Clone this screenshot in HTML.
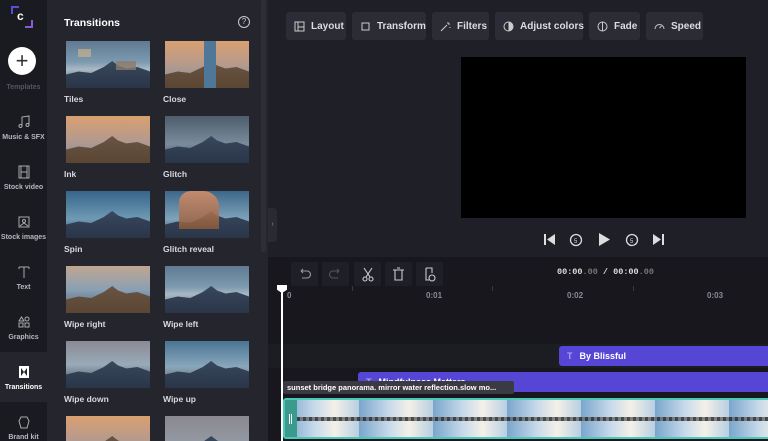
<!DOCTYPE html>
<html><head><style>
*{margin:0;padding:0;box-sizing:border-box}
html,body{width:768px;height:441px;overflow:hidden}
body{background:#1e1f27;font-family:"Liberation Sans",sans-serif;position:relative;color:#ddd}
.abs{position:absolute}
#side{left:0;top:0;width:47px;height:441px;background:#1a1a21}
.si{position:absolute;left:0;width:47px;text-align:center;font-size:7px;color:#b8b8c0;font-weight:bold;white-space:nowrap}
.si svg{display:block;margin:0 auto 5px}
#panel{left:47px;top:0;width:221px;height:441px;background:#25252e}
.th{position:absolute;width:84px;height:47px;overflow:hidden;background:linear-gradient(#5f7a92 0%,#7d9ab0 45%,#a9b9c4 60%,#50657a 100%)}
.th .m{position:absolute;left:0;right:0;bottom:0;height:30px;background:linear-gradient(#3a4a60,#2a3548);clip-path:polygon(0 55%,15% 45%,30% 50%,45% 30%,55% 10%,62% 25%,72% 35%,85% 30%,100% 45%,100% 100%,0 100%)}
.th.w .m{background:linear-gradient(#6b5646,#5a4632)}
.th.w{background:linear-gradient(#d9a070 0%,#b69a8c 50%,#7f93a5 100%)}
.lb{position:absolute;font-size:8.5px;color:#d8d8de;font-weight:bold}
.tb{position:absolute;top:12px;height:28px;background:#2b2c35;border-radius:3px;font-size:10px;color:#dcdce2;font-weight:bold;display:flex;align-items:center;padding-left:8px;gap:6px;white-space:nowrap}
.tb svg{flex:none}
#tl{left:268px;top:257px;width:500px;height:184px;background:#17171d}
.tbt{position:absolute;top:262px;width:27px;height:24px;background:#1f1f27;border-radius:2px}
.rl{position:absolute;top:291px;font-size:8px;color:#8a8a94;font-weight:bold}
.tk{position:absolute;top:286px;width:1px;height:5px;background:#3a3a44}
</style></head><body>
<div id="side" class="abs">
  <div class="abs" style="left:11px;top:6px;width:22px;height:22px">
    <div class="abs" style="left:0;top:0;width:8px;height:8px;border-left:2px solid #5a4be0;border-top:2px solid #5a4be0"></div>
    <div class="abs" style="right:0;bottom:0;width:8px;height:8px;border-right:2px solid #8a5ad8;border-bottom:2px solid #8a5ad8"></div>
    <div class="abs" style="left:6px;top:3px;font-size:12px;font-weight:bold;color:#fff">c</div>
  </div>
  <div class="abs" style="left:8px;top:47px;width:28px;height:28px;border-radius:50%;background:#fff;color:#333;font-size:22px;line-height:27px;text-align:center">+</div>
  <div class="si" style="top:84px;color:#55555e">Templates</div>
  <div class="si" style="top:115px"><svg width="12" height="14" viewBox="0 0 12 14" fill="none" stroke="#aaa"><path d="M4 11V2l7-1v9"/><circle cx="2.5" cy="11" r="1.5"/><circle cx="9.5" cy="10" r="1.5"/></svg>Music &amp; SFX</div>
  <div class="si" style="top:165px"><svg width="12" height="14" viewBox="0 0 12 14" fill="none" stroke="#aaa"><rect x="1" y="1" width="10" height="12"/><path d="M3 1v12M9 1v12M3 7h6"/></svg>Stock video</div>
  <div class="si" style="top:215px"><svg width="12" height="14" viewBox="0 0 12 14" fill="none" stroke="#aaa"><rect x="1" y="2" width="10" height="10"/><circle cx="6" cy="6" r="1.5"/><path d="M2 11l4-3 4 3"/></svg>Stock images</div>
  <div class="si" style="top:265px"><svg width="12" height="14" viewBox="0 0 12 14" fill="none" stroke="#aaa"><path d="M1 2h10M6 2v11M1 2v2M11 2v2"/></svg>Text</div>
  <div class="si" style="top:315px"><svg width="12" height="14" viewBox="0 0 12 14" fill="none" stroke="#aaa"><path d="M1 6l2.5-4 2.5 4z"/><circle cx="9" cy="4" r="2"/><rect x="1" y="8" width="4" height="4"/><rect x="7" y="8" width="4" height="4"/></svg>Graphics</div>
  <div class="abs" style="left:0;top:352px;width:47px;height:50px;background:#25252e"></div>
  <div class="si" style="top:365px;color:#fff"><svg width="12" height="14" viewBox="0 0 12 14"><rect x="1" y="1" width="10" height="12" fill="#fff"/><path d="M3 3l3 4-3 4zM9 3l-3 4 3 4z" fill="#25252e"/></svg>Transitions</div>
  <div class="si" style="top:415px"><svg width="12" height="14" viewBox="0 0 12 14" fill="none" stroke="#aaa"><path d="M3 2h6l2 4-2 7H3L1 6z"/></svg>Brand kit</div>
</div>
<div id="panel" class="abs">
  <div class="abs" style="left:17px;top:17px;font-size:10.5px;font-weight:bold;color:#fff">Transitions</div>
  <div class="abs" style="left:191px;top:16px;width:12px;height:12px;border:1px solid #ccc;border-radius:50%;font-size:8px;text-align:center;line-height:10px;color:#ccc">?</div>
  <div class="abs" style="left:214px;top:0;width:5px;height:252px;background:#2e2e38;border-radius:2px"></div>
</div>
<div class="th" style="left:66px;top:41px"><div class="m"></div><div class="abs" style="left:12px;top:8px;width:13px;height:8px;background:#c9b08a;opacity:.7"></div><div class="abs" style="left:50px;top:20px;width:20px;height:9px;background:#8a7a6a;opacity:.8"></div></div>
<div class="th w" style="left:165px;top:41px"><div class="m"></div><div class="abs" style="left:39px;top:0;width:12px;height:47px;background:#4f7898"></div></div>
<div class="th w" style="left:66px;top:116px"><div class="m"></div></div>
<div class="th" style="left:165px;top:116px;background:linear-gradient(#4e5c6c,#7a8c9c 60%,#3a4656)"><div class="m"></div></div>
<div class="th" style="left:66px;top:191px;background:linear-gradient(#36658a,#6f9ab4 60%,#3a5570)"><div class="m"></div></div>
<div class="th" style="left:165px;top:191px;background:linear-gradient(#3d6788,#7fa3bc 60%,#3a5570)"><div class="m"></div><div class="abs" style="left:14px;top:0;width:40px;height:38px;background:linear-gradient(#d9906a,#8a5a3a);opacity:.85;border-radius:30% 40% 0 0"></div></div>
<div class="th w" style="left:66px;top:266px;background:linear-gradient(#c0a690,#8aa0b4 50%,#4e627a)"><div class="m"></div></div>
<div class="th" style="left:165px;top:266px"><div class="m"></div></div>
<div class="th" style="left:66px;top:341px;background:linear-gradient(#8a8a94,#9aaab8 50%,#3a4a5e)"><div class="m"></div></div>
<div class="th" style="left:165px;top:341px;background:linear-gradient(#4a7494,#8aa8bc 55%,#5a5040)"><div class="m"></div></div>
<div class="th w" style="left:66px;top:416px"><div class="m"></div></div>
<div class="th" style="left:165px;top:416px;background:linear-gradient(#8a8890,#9aa6b0)"><div class="m"></div></div>
<div class="lb" style="left:64px;top:94px">Tiles</div><div class="lb" style="left:163px;top:94px">Close</div>
<div class="lb" style="left:64px;top:169px">Ink</div><div class="lb" style="left:163px;top:169px">Glitch</div>
<div class="lb" style="left:64px;top:244px">Spin</div><div class="lb" style="left:163px;top:244px">Glitch reveal</div>
<div class="lb" style="left:64px;top:319px">Wipe right</div><div class="lb" style="left:163px;top:319px">Wipe left</div>
<div class="lb" style="left:64px;top:394px">Wipe down</div><div class="lb" style="left:163px;top:394px">Wipe up</div>
<div class="abs" style="left:268px;top:208px;width:9px;height:34px;background:#2a2a33;border-radius:0 4px 4px 0;font-size:7px;color:#888;line-height:34px;text-align:center">‹</div>
<div class="tb" style="left:286px;width:60px"><svg width="11" height="11" fill="none" stroke="#ccc"><rect x="1" y="1" width="9" height="9"/><path d="M4 1v9M4 6h6"/></svg>Layout</div>
<div class="tb" style="left:352px;width:74px"><svg width="11" height="11" fill="none" stroke="#ccc"><rect x="2" y="2" width="7" height="7"/></svg>Transform</div>
<div class="tb" style="left:432px;width:57px"><svg width="11" height="11" fill="none" stroke="#ccc"><path d="M1 10l6-6M8 1v2M10 3H8M10 6v1"/></svg>Filters</div>
<div class="tb" style="left:495px;width:88px"><svg width="11" height="11"><circle cx="5.5" cy="5.5" r="4.5" fill="none" stroke="#ccc"/><path d="M5.5 1a4.5 4.5 0 0 1 0 9z" fill="#ccc"/></svg>Adjust colors</div>
<div class="tb" style="left:589px;width:51px"><svg width="11" height="11" fill="none" stroke="#ccc"><circle cx="5.5" cy="5.5" r="4.5"/><path d="M5.5 1v9"/></svg>Fade</div>
<div class="tb" style="left:646px;width:57px"><svg width="11" height="11" fill="none" stroke="#ccc"><path d="M1 8a4.5 4.5 0 0 1 9 0M5.5 7l2-2"/></svg>Speed</div>
<div class="abs" style="left:461px;top:57px;width:285px;height:161px;background:#000"></div>
<svg class="abs" style="left:540px;top:231px" width="130" height="18" fill="#ddd">
<rect x="4" y="3" width="2" height="11"/><path d="M15 3v11l-8-5.5z"/>
<circle cx="36" cy="9" r="5.5" fill="none" stroke="#ddd" stroke-width="1.3"/><text x="34" y="12" font-size="6" font-family="Liberation Sans">5</text>
<path d="M59 2v13l11-6.5z"/>
<circle cx="92" cy="9" r="5.5" fill="none" stroke="#ddd" stroke-width="1.3"/><text x="90" y="12" font-size="6" font-family="Liberation Sans">5</text>
<path d="M113 3v11l8-5.5z"/><rect x="122" y="3" width="2" height="11"/>
</svg>
<div id="tl" class="abs"></div>
<div class="tbt" style="left:291px"></div><div class="tbt" style="left:322px"></div><div class="tbt" style="left:354px"></div><div class="tbt" style="left:385px"></div><div class="tbt" style="left:416px"></div>
<svg class="abs" style="left:291px;top:262px" width="160" height="24" fill="none" stroke="#999" stroke-width="1.1">
<path d="M10 9h6a3 3 0 0 1 0 7h-5M10 9l2-2M10 9l2 2"/>
<path d="M48 9h-6a3 3 0 0 0 0 7h5M48 9l-2-2M48 9l-2 2" stroke="#555"/>
<path d="M73 6l6 9M81 6l-6 9" stroke="#ccc"/><circle cx="74" cy="17" r="2" stroke="#ccc"/><circle cx="80" cy="17" r="2" stroke="#ccc"/>
<path d="M102 8h11M104 8v10h7V8M106 6h3" stroke="#ccc"/>
<path d="M135 6h6v5M135 6v12h3" stroke="#ccc"/><circle cx="141" cy="16" r="3" stroke="#ccc"/>
</svg>
<div class="abs" style="left:557px;top:267px;font-family:'Liberation Mono',monospace;font-size:8.5px;font-weight:bold;color:#ddd;white-space:nowrap">00:00<span style="color:#777">.00</span> / 00:00<span style="color:#777">.00</span></div>
<div class="rl" style="left:287px">0</div><div class="rl" style="left:426px">0:01</div><div class="rl" style="left:567px">0:02</div><div class="rl" style="left:707px">0:03</div>
<div class="tk" style="left:352px"></div><div class="tk" style="left:492px"></div><div class="tk" style="left:633px"></div>
<div class="abs" style="left:268px;top:344px;width:500px;height:24px;background:#1c1c23"></div>
<div class="abs" style="left:559px;top:346px;width:209px;height:20px;background:#5646d6;border-radius:3px 0 0 3px;font-size:9px;font-weight:bold;color:#fff;line-height:20px;padding-left:8px"><span style="color:#a9a0f0;margin-right:7px">T</span>By Blissful</div>
<div class="abs" style="left:358px;top:372px;width:410px;height:20px;background:#5646d6;border-radius:3px 0 0 3px;font-size:9px;font-weight:bold;color:#fff;line-height:20px;padding-left:8px;overflow:hidden"><span style="color:#a9a0f0;margin-right:7px">T</span>Mindfulness Matters</div>
<div class="abs" style="left:283px;top:381px;width:231px;height:13px;background:#3a3a42;border-radius:2px;font-size:7.5px;font-weight:bold;color:#fff;line-height:13px;padding-left:4px;white-space:nowrap;overflow:hidden">sunset bridge panorama. mirror water reflection.slow mo...</div>
<div class="abs" style="left:283px;top:398px;width:485px;height:41px;border:2px solid #4ac8b8;border-right:none;border-radius:3px 0 0 3px;overflow:hidden;background:repeating-linear-gradient(90deg,#7aa6cc 0px,#c8daea 30px,#f4f0e8 50px,#b8cfe2 74px);">
  <div class="abs" style="left:0;top:17px;width:485px;height:4px;background:repeating-linear-gradient(90deg,#222 0 3px,#666 3px 6px);opacity:.8"></div>
  <div class="abs" style="left:0;top:0;width:12px;height:41px;background:#3a9a8c"></div>
  <div class="abs" style="left:4px;top:14px;width:3px;height:10px;border-left:1px solid #fff;border-right:1px solid #fff"></div>
</div>
<div class="abs" style="left:281px;top:286px;width:2px;height:155px;background:#fff"></div>
<div class="abs" style="left:277px;top:285px;width:10px;height:8px;background:#fff;clip-path:polygon(0 0,100% 0,100% 60%,50% 100%,0 60%)"></div>
</body></html>
